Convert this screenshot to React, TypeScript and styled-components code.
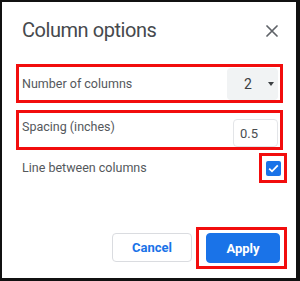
import React from "react";
import styled, { createGlobalStyle } from "styled-components";

const GlobalStyle = createGlobalStyle`
  html, body {
    margin: 0;
    padding: 0;
    background: #ffffff;
  }
  * {
    box-sizing: border-box;
  }
`;

const Frame = styled.div`
  width: 300px;
  height: 281px;
  border-style: solid;
  border-color: #111111;
  border-width: 2px 4px 3px 2px;
  background: #ffffff;
  font-family: Roboto, "Liberation Sans", Arial, sans-serif;
  color: #4a4d51;
  display: flex;
  flex-direction: column;
  padding: 14px 9px 0 14px;
`;

const TitleRow = styled.div`
  display: flex;
  align-items: center;
  justify-content: space-between;
  height: 28px;
  padding: 0 4px 0 6px;
  margin-right: 4px;
  margin-bottom: 20px;
`;

const Title = styled.h1`
  margin: 0;
  font-size: 20px;
  line-height: 28px;
  font-weight: 400;
  letter-spacing: -0.45px;
  color: #46494d;
`;

const CloseButton = styled.button`
  border: none;
  background: none;
  padding: 0;
  width: 14px;
  height: 14px;
  margin-top: 2px;
  display: flex;
  align-items: center;
  justify-content: center;
  cursor: pointer;
`;

const Marked = styled.div<{ $height?: number; $top?: boolean }>`
  border: 3px solid #f20d0d;
  display: flex;
  align-items: ${(p) => (p.$top ? "flex-start" : "center")};
  justify-content: space-between;
  height: ${(p) => (p.$height ? `${p.$height}px` : "auto")};
`;

const OptionBox = styled(Marked)`
  margin-right: 4px;
  padding: 0 2px 0 3px;
`;

const Label = styled.span<{ $pad?: number }>`
  font-size: 12.5px;
  line-height: 18px;
  color: #54585c;
  padding-top: ${(p) => p.$pad ?? 0}px;
`;

const Select = styled.div`
  width: 51px;
  height: 32px;
  border-radius: 4px;
  background: #f1f3f4;
  display: flex;
  align-items: center;
  padding-left: 17px;
  gap: 16px;
  font-size: 14px;
  color: #3c4043;
`;

const Caret = styled.span`
  width: 0;
  height: 0;
  border-left: 3.5px solid transparent;
  border-right: 3.5px solid transparent;
  border-top: 4px solid #3c4043;
`;

const NumberInput = styled.input`
  width: 45px;
  height: 28px;
  margin-top: 6px;
  border: 1px solid #e3e5e8;
  border-radius: 4px;
  padding: 0 0 0 6px;
  font-family: inherit;
  font-size: 13px;
  color: #4a4d51;
  outline: none;
`;

const CheckRow = styled.div`
  display: flex;
  align-items: center;
  justify-content: space-between;
  margin-top: 3px;
  padding-left: 6px;
`;

const CheckBox = styled(Marked)`
  width: 28px;
  height: 30px;
  padding: 2px 3px 1px 4px;
`;

const Check = styled.span`
  width: 15px;
  height: 15px;
  border-radius: 2px;
  background: #1a73e8;
  display: flex;
  align-items: center;
  justify-content: center;
`;

const Footer = styled.div`
  margin-top: 44px;
  display: flex;
  justify-content: flex-end;
  align-items: flex-start;
  gap: 4px;
`;

const Button = styled.button<{ $primary?: boolean }>`
  height: ${(p) => (p.$primary ? 30 : 29)}px;
  width: ${(p) => (p.$primary ? 74 : 80)}px;
  border-radius: 4px;
  font-family: inherit;
  font-size: 13px;
  font-weight: 700;
  cursor: pointer;
  border: 1px solid ${(p) => (p.$primary ? "#1a73e8" : "#dadce0")};
  background: ${(p) => (p.$primary ? "#1a73e8" : "#ffffff")};
  color: ${(p) => (p.$primary ? "#ffffff" : "#1a73e8")};
  margin-top: ${(p) => (p.$primary ? 0 : 6)}px;
`;

const ApplyBox = styled(Marked)`
  width: 91px;
  height: 42px;
  padding: 3px 4px 3px 7px;
  align-items: flex-start;
`;

export default function App() {
  return (
    <>
      <GlobalStyle />
      <Frame>
        <TitleRow>
          <Title>Column options</Title>
          <CloseButton aria-label="Close">
            <svg width="12" height="12" viewBox="0 0 12 12">
              <path
                d="M1 1 L11 11 M11 1 L1 11"
                stroke="#5f6368"
                strokeWidth="1.7"
                strokeLinecap="round"
              />
            </svg>
          </CloseButton>
        </TitleRow>

        <OptionBox $height={39}>
          <Label>Number of columns</Label>
          <Select>
            2
            <Caret />
          </Select>
        </OptionBox>

        <OptionBox $height={40} $top style={{ marginTop: 7 }}>
          <Label $pad={5}>Spacing (inches)</Label>
          <NumberInput defaultValue="0.5" />
        </OptionBox>

        <CheckRow>
          <Label>Line between columns</Label>
          <CheckBox>
            <Check>
              <svg width="11" height="9" viewBox="0 0 11 9">
                <path
                  d="M1.2 4.6 L4 7.3 L9.8 1.4"
                  stroke="#ffffff"
                  strokeWidth="1.8"
                  fill="none"
                />
              </svg>
            </Check>
          </CheckBox>
        </CheckRow>

        <Footer>
          <Button>Cancel</Button>
          <ApplyBox>
            <Button $primary>Apply</Button>
          </ApplyBox>
        </Footer>
      </Frame>
    </>
  );
}
